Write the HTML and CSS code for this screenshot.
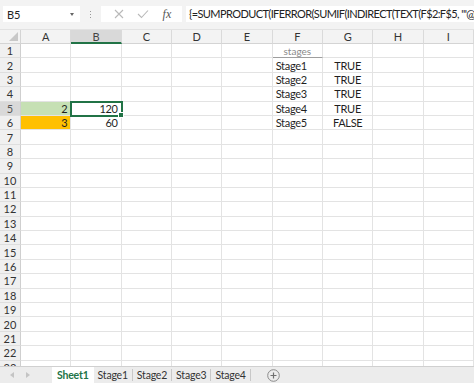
FILE: index.html
```html
<!DOCTYPE html>
<html lang="en">
<head>
  <meta charset="UTF-8">
  <title>Sheet1</title>
  <link rel="stylesheet" href="styles.css">
</head>
<body>
  <div class="formula-bar">
    <div class="name-box">
      <span>B5</span>
      <span class="caret"></span>
    </div>
    <div class="grip"><i></i><i></i><i></i></div>
    <div class="fx-box">
      <svg width="10" height="10" viewBox="0 0 10 10"><path d="M1 1 L9 9 M9 1 L1 9" stroke="#b9b9b9" stroke-width="1.1" fill="none"/></svg>
      <svg width="12" height="10" viewBox="0 0 12 10"><path d="M1 5 L4.5 8.5 L11 1.5" stroke="#b9b9b9" stroke-width="1.1" fill="none"/></svg>
      <span class="fx">fx</span>
    </div>
    <div class="formula">{=SUMPRODUCT(IFERROR(SUMIF(INDIRECT(TEXT(F$2:F$5, "'@'!<span class="caret-mark"></span></div>
  </div>

  <div class="sheet">
    <div class="grid" id="grid"></div>
  </div>

  <div class="tabs">
    <div class="tab-nav">
      <svg width="4" height="6" viewBox="0 0 4 6"><path d="M4 0 L0 3 L4 6 Z" fill="#c4c4c4"/></svg>
      <svg width="4" height="6" viewBox="0 0 4 6"><path d="M0 0 L4 3 L0 6 Z" fill="#c4c4c4"/></svg>
    </div>
    <div class="tab active">Sheet1</div>
    <div class="tab">Stage1</div>
    <div class="tab">Stage2</div>
    <div class="tab">Stage3</div>
    <div class="tab">Stage4</div>
    <div class="add-sheet">
      <svg width="13" height="13" viewBox="0 0 13 13"><circle cx="6.5" cy="6.5" r="5.8" stroke="#8a8a8a" fill="none"/><path d="M6.5 3.5 V9.5 M3.5 6.5 H9.5" stroke="#6f6f6f" stroke-width="1.2"/></svg>
    </div>
  </div>

  <script>
    const columns = ['A', 'B', 'C', 'D', 'E', 'F', 'G', 'H', 'I'];
    const grid = document.getElementById('grid');

    // cell content keyed by address: [text, extra class]
    const cells = {
      F1: ['stages', 'label'],
      F2: ['Stage1'], G2: ['TRUE', 'center'],
      F3: ['Stage2'], G3: ['TRUE', 'center'],
      F4: ['Stage3'], G4: ['TRUE', 'center'],
      F5: ['Stage4'], G5: ['TRUE', 'center'],
      F6: ['Stage5'], G6: ['FALSE', 'center'],
      A5: ['2', 'num fill-green'], B5: ['120', 'num selected'],
      A6: ['3', 'num fill-orange'], B6: ['60', 'num']
    };

    function addCell(cls, text) {
      const div = document.createElement('div');
      div.className = cls;
      if (text) div.textContent = text;
      grid.appendChild(div);
      return div;
    }

    addCell('corner');
    for (let c of columns) {
      addCell(c === 'B' ? 'col-head active' : 'col-head', c);
    }

    for (let r = 1; r <= 23; r++) {
      addCell(r === 5 ? 'row-head active' : 'row-head', String(r));
      for (let c of columns) {
        const data = cells[c + r];
        const div = addCell(data && data[1] ? 'cell ' + data[1] : 'cell', data ? data[0] : '');
        if (c + r === 'B5') {
          const handle = document.createElement('span');
          handle.className = 'handle';
          div.appendChild(handle);
        }
      }
    }
  </script>
</body>
</html>
```

FILE: styles.css
```css
body {
  margin: 0;
  width: 474px;
  height: 383px;
  overflow: hidden;
  font-family: Lato, 'Open Sans', sans-serif;
  color: #222;
  background: #fff;
}

.formula-bar {
  display: flex;
  align-items: center;
  height: 30px;
  padding: 0 0 0 3px;
  background: #f3f3f3;
  border-bottom: 1px solid #e2e2e2;
  box-sizing: border-box;
}
.name-box {
  display: flex;
  align-items: center;
  justify-content: space-between;
  width: 77px;
  height: 16px;
  padding: 0 6px 0 4px;
  background: #fff;
  font-size: 11px;
  box-sizing: border-box;
  margin-top: -1px;
}
.caret {
  width: 0;
  height: 0;
  border-left: 2.5px solid transparent;
  border-right: 2.5px solid transparent;
  border-top: 3px solid #666;
}
.grip {
  display: flex;
  flex-direction: column;
  gap: 2px;
  width: 21px;
  align-items: center;
  margin-top: -1px;
}
.grip i {
  width: 1px;
  height: 1px;
  background: #999;
}
.fx-box {
  display: flex;
  align-items: center;
  justify-content: space-around;
  width: 81px;
  height: 16px;
  background: #fff;
  padding: 0 4px 0 6px;
  box-sizing: border-box;
  margin-top: -1px;
}
.fx {
  font-family: 'Liberation Serif', serif;
  font-style: italic;
  font-size: 12px;
  color: #555;
}
.formula {
  flex: 1;
  height: 16px;
  margin-left: 4px;
  margin-top: -1px;
  padding-left: 3px;
  background: #fff;
  font-size: 11px;
  letter-spacing: -0.6px;
  line-height: 16px;
  white-space: nowrap;
  overflow: hidden;
}
.caret-mark {
  display: inline-block;
  width: 3px;
  height: 10px;
  margin-left: 1px;
  background: #7a8fb8;
  vertical-align: -1px;
}

.sheet {
  height: 336px;
  overflow: hidden;
}
.grid {
  display: grid;
  grid-template-columns: 21px repeat(9, 1fr);
  grid-template-rows: 14px;
  grid-auto-rows: 14.4px;
  font-size: 11px;
}
.corner {
  position: relative;
  background: #f3f3f3;
  border-right: 1px solid #d4d4d4;
  border-bottom: 1px solid #d4d4d4;
}
.corner::after {
  content: '';
  position: absolute;
  right: 2px;
  bottom: 2px;
  border-left: 9px solid transparent;
  border-bottom: 9px solid #c8c8c8;
}
.col-head {
  display: flex;
  align-items: center;
  justify-content: center;
  background: #f3f3f3;
  border-right: 1px solid #dadada;
  border-bottom: 1px solid #d4d4d4;
  color: #333;
}
.col-head.active {
  background: #d9d9d9;
  border-bottom: 2px solid #217346;
  color: #444;
}
.row-head {
  display: flex;
  align-items: center;
  justify-content: center;
  background: #f0f0f0;
  border-right: 1px solid #cfcfcf;
  border-bottom: 1px solid #dedede;
  color: #333;
}
.row-head.active {
  background: #d9d9d9;
  color: #555;
}
.cell {
  display: flex;
  align-items: center;
  padding: 0 3px;
  border-right: 1px solid #e3e3e3;
  border-bottom: 1px solid #e3e3e3;
  white-space: nowrap;
  overflow: visible;
  letter-spacing: -0.3px;
  color: #1f1f1f;
}
.cell.center {
  justify-content: center;
}
.cell.num {
  justify-content: flex-end;
}
.cell.label {
  justify-content: center;
  color: #8a8a8a;
  font-size: 10px;
  letter-spacing: 0;
  border-bottom: 1px solid #9e9e9e;
}
.fill-green {
  background: #c6e0b4;
}
.fill-orange {
  background: #ffc000;
}
.cell.selected {
  position: relative;
  outline: 2px solid #217346;
  outline-offset: -1px;
}
.handle {
  position: absolute;
  right: -3px;
  bottom: -3px;
  width: 4px;
  height: 4px;
  background: #217346;
  border: 1px solid #fff;
}

.tabs {
  display: flex;
  align-items: stretch;
  height: 17px;
  background: #ececec;
  border-top: 1px solid #d0d0d0;
  box-sizing: border-box;
  font-size: 10.5px;
  letter-spacing: -0.2px;
}
.tab-nav {
  display: flex;
  align-items: center;
  gap: 12px;
  width: 52px;
  padding-left: 10px;
  box-sizing: border-box;
}
.tab {
  display: flex;
  align-items: center;
  padding: 0 4px;
  border-right: 1px solid #c8c8c8;
  color: #333;
  margin: 2px 0;
}
.tab.active {
  margin: 0;
  padding: 0 5px 0 5px;
  background: #fff;
  color: #217346;
  font-weight: bold;
  border-right: none;
}
.add-sheet {
  display: flex;
  align-items: center;
  margin-left: 16px;
}
```
